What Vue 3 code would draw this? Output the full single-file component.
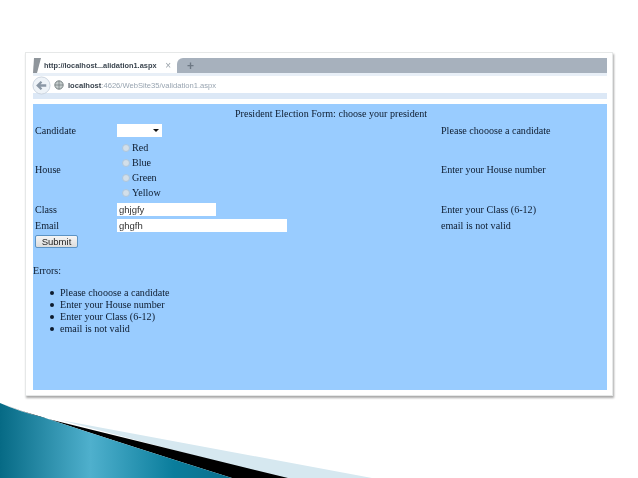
<script setup>
const houses = ['Red', 'Blue', 'Green', 'Yellow']
const errors = ['Please chooose a candidate', 'Enter your House number', 'Enter your Class (6-12)', 'email is not valid']
</script>

<template>
  <div class="slide">
    <div class="window">
      <div class="tabstrip">
        <svg class="tabcap" width="8" height="15" viewBox="0 0 8 15"><path d="M0 15 L1 0 H8 L4 15 Z" fill="#8f959b"/></svg>
        <div class="tab">
          <span class="tabtitle">http://localhost...alidation1.aspx</span>
          <span class="tabclose">×</span>
        </div>
        <div class="tabrest"><span class="plus">+</span></div>
      </div>
      <div class="urlbar">
        <svg class="back" width="19" height="19" viewBox="0 0 20 20">
          <circle cx="10" cy="10" r="9" fill="#eef3f8" stroke="#c9d3de"/>
          <path d="M15 10 H7 M10 6 L6 10 L10 14" fill="none" stroke="#8a97a5" stroke-width="2.4"/>
        </svg>
        <svg class="globe" width="10" height="10" viewBox="0 0 11 11">
          <circle cx="5.5" cy="5.5" r="4.6" fill="#c4cbcb" stroke="#717a7c"/>
          <path d="M1 5.5 H10 M5.5 1 V10" stroke="#717a7c" stroke-width=".8"/>
        </svg>
        <span class="host">localhost</span><span class="path">:4626/WebSite35/validation1.aspx</span>
      </div>
      <div class="toolbar"></div>
      <div class="page">
        <div class="title">President Election Form: choose your president</div>
        <div class="row r-cand">
          <div class="lab">Candidate</div>
          <div class="ctl"><div class="select"><span class="caret"></span></div></div>
          <div class="msg">Please chooose a candidate</div>
        </div>
        <div class="row r-house">
          <div class="lab">House</div>
          <div class="ctl radios">
            <div v-for="h in houses" :key="h" class="radio"><span class="dot"></span>{{ h }}</div>
          </div>
          <div class="msg">Enter your House number</div>
        </div>
        <div class="row r-class">
          <div class="lab">Class</div>
          <div class="ctl"><div class="input w-class">ghjgfy</div></div>
          <div class="msg">Enter your Class (6-12)</div>
        </div>
        <div class="row r-email">
          <div class="lab">Email</div>
          <div class="ctl"><div class="input w-email">ghgfh</div></div>
          <div class="msg">email is not valid</div>
        </div>
        <button class="submit">Submit</button>
        <div class="errtitle">Errors:</div>
        <ul class="errors">
          <li v-for="e in errors" :key="e" class="err">{{ e }}</li>
        </ul>
      </div>
    </div>
    <svg class="swoosh" width="400" height="108" viewBox="0 0 400 108">
      <defs>
        <linearGradient id="teal" x1="0" y1="0" x2="1" y2="0">
          <stop offset="0" stop-color="#066a85"/>
          <stop offset=".39" stop-color="#4fb0cd"/>
          <stop offset=".75" stop-color="#0a7d9c"/>
          <stop offset="1" stop-color="#0a6f8c"/>
        </linearGradient>
      </defs>
      <path d="M60 50 L372 108 H280 Z" fill="#d6e8f0"/>
      <path d="M0 33 Q20 41 40 47 L288 108 H232 Q130 76 42 47 Q20 41 0 33 Z" fill="#000"/>
      <path d="M0 33 Q20 42 42 47 Q130 76 232 108 H0 Z" fill="url(#teal)"/>
    </svg>
  </div>
</template>

<style scoped>
.slide {
  position: relative;
  width: 638px;
  height: 478px;
  background: #fff;
  overflow: hidden;
  padding: 52px 0 0 25px;
  box-sizing: border-box;
  font-family: "Liberation Serif", serif;
  color: #0d1b2e;
}
.window {
  width: 588px;
  height: 344px;
  box-sizing: border-box;
  padding: 5px 5px 5px 7px;
  background: #fff;
  border: 1px solid #e6e8e8;
  box-shadow: 1px 2px 2px #a9a9a9;
  filter: blur(.35px);
}
.tabstrip {
  display: flex;
  height: 15px;
}
.tabcap { flex: none; }
.tab {
  width: 136px;
  display: flex;
  align-items: center;
  justify-content: space-between;
  padding: 0 6px 0 3px;
  box-sizing: border-box;
  background: #fff;
  font: 700 7.4px "Liberation Sans", sans-serif;
  color: #3c4650;
}
.tabtitle { white-space: nowrap; }
.tabclose { color: #9aa2aa; font-weight: 400; font-size: 10px; }
.tabrest {
  flex: 1;
  background: #a7b1bd;
  border-radius: 6px 0 0 0;
  padding-left: 10px;
  line-height: 13px;
}
.plus { font: 700 12px "Liberation Sans", sans-serif; color: #6d7884; }
.urlbar {
  height: 20px;
  box-sizing: border-box;
  padding-top: 4px;
  display: flex;
  align-items: center;
  background: linear-gradient(#e8eff7 0 3px, #fff 3px);
  font: 7.6px "Liberation Sans", sans-serif;
}
.back { flex: none; margin-left: -1px; }
.globe { flex: none; margin: 0 4px 0 3px; }
.host { font-weight: 700; color: #3c4650; }
.path { color: #98a4b0; }
.toolbar {
  height: 6px;
  background: #dce8f6;
  margin-bottom: 5px;
}
.page {
  height: 286px;
  background: #99ccff;
  font-size: 10.1px;
  line-height: 12px;
  padding-top: 4px;
  box-sizing: border-box;
}
.title { text-align: center; margin-bottom: 3px; padding-left: 22px; }
.row {
  display: grid;
  grid-template-columns: 82px 324px 1fr;
  align-items: center;
  padding-left: 2px;
}
.r-cand { height: 15px; }
.r-house { height: 60px; margin-top: 2px; }
.r-class { height: 15px; margin-top: 2px; }
.r-email { height: 15px; margin-top: 1px; }
.select {
  width: 45px;
  height: 13px;
  background: #fff;
  position: relative;
}
.caret {
  position: absolute;
  right: 3px;
  top: 5px;
  border: 3px solid transparent;
  border-top-color: #111;
  border-bottom: 0;
}
.radios { display: flex; flex-direction: column; padding-left: 5px; }
.radio { height: 15px; display: flex; align-items: center; gap: 2px; }
.dot {
  width: 8px;
  height: 8px;
  border-radius: 50%;
  background: #d3dfe9;
  border: 1px solid #aec6dc;
  box-sizing: border-box;
}
.input {
  height: 13px;
  background: #fff;
  box-sizing: border-box;
  padding-left: 2px;
  font: 9.5px/13px "Liberation Sans", sans-serif;
  color: #333;
}
.w-class { width: 99px; }
.w-email { width: 170px; }
.submit {
  display: block;
  width: 43px;
  height: 13px;
  margin: 2px 0 0 2px;
  padding: 0;
  border: 1px solid #5c93c4;
  border-radius: 2px;
  background: linear-gradient(#f6f6f6, #dcdcdc);
  font: 9.5px "Liberation Sans", sans-serif;
  color: #222;
}
.errtitle { margin-top: 17px; }
.errors {
  list-style: none;
  margin: 10px 0 0;
  padding: 0 0 0 17px;
}
.err {
  display: flex;
  align-items: center;
  gap: 6px;
}
.err::before {
  content: "";
  width: 4px;
  height: 4px;
  border-radius: 50%;
  background: #0d1b2e;
}
.swoosh {
  position: absolute;
  left: 0;
  top: 370px;
}
</style>
